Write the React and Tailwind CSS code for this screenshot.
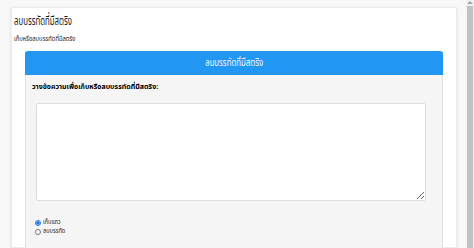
import React, { useState } from 'react'

const FONT = { fontFamily: '"Noto Sans Thai", "Noto Sans", sans-serif' }

export default function App() {
  const [mode, setMode] = useState('keep')
  const [text, setText] = useState('')

  return (
    <div className="flex h-[248px] w-[474px] overflow-hidden bg-[#f8f8f8]" style={FONT}>
      {/* ── PAGE ── */}
      <div className="flex-1 min-w-0 pl-[11px] pr-[9px] pt-[7px]">
        <div className="h-full bg-white border border-[#ececec] shadow-sm px-[1px]">
          <h1 className="mt-[4px] pl-[1px] text-[13px] leading-[18px] text-[#1a1a1a]">
            <span className="inline-block origin-left scale-x-[0.6]">ลบบรรทัดที่มีสตริง</span>
          </h1>
          <p className="mt-[4px] pl-[1px] text-[7px] leading-[10px] text-[#222]">
            <span className="inline-block origin-left scale-x-[0.83]">เก็บหรือลบบรรทัดที่มีสตริง</span>
          </p>

          {/* Panel */}
          <div className="mt-[7px] mx-[12px] h-full rounded-t-[3px] border border-[#e3e3e3] bg-[#f5f5f5]">
            <div className="h-[24px] flex items-center justify-center rounded-t-[3px] bg-[#2196f3] text-[#f4f9ff] text-[10px] -mx-px -mt-px">
              <span className="inline-block scale-x-[0.78]">ลบบรรทัดที่มีสตริง</span>
            </div>
            <div className="pl-[6px] pt-[7px]">
              <label className="block text-[7px] leading-[10px] font-bold text-[#000]">
                วางข้อความเพื่อเก็บหรือลบบรรทัดที่มีสตริง:
              </label>
              <textarea
                value={text}
                onChange={e => setText(e.target.value)}
                className="mt-[11px] ml-[4px] block w-[390px] h-[98px] resize-y bg-white border border-[#dcdcdc] rounded-[2px] focus:outline-none"
              />
              <div className="mt-[17px] ml-[3px] text-[7px] leading-[9px] text-[#222]">
                <label className="flex items-center gap-[2px]">
                  <input
                    type="radio"
                    name="mode"
                    checked={mode === 'keep'}
                    onChange={() => setMode('keep')}
                    className="m-0 w-[6px] h-[6px] accent-[#1a73e8]"
                  />
                  <span className="inline-block origin-left scale-x-[0.8]">เก็บแถว</span>
                </label>
                <label className="flex items-center gap-[2px]">
                  <input
                    type="radio"
                    name="mode"
                    checked={mode === 'remove'}
                    onChange={() => setMode('remove')}
                    className="m-0 w-[6px] h-[6px] accent-[#1a73e8]"
                  />
                  <span className="inline-block origin-left scale-x-[0.8]">ลบบรรทัด</span>
                </label>
              </div>
            </div>
          </div>
        </div>
      </div>

      {/* ── SCROLLBAR ── */}
      <div className="w-[8px] shrink-0 bg-[#f1f1f1] flex flex-col items-center pt-[1px]">
        <div className="w-0 h-0 border-l-[3px] border-r-[3px] border-b-[3px] border-l-transparent border-r-transparent border-b-[#a3a3a3]" />
        <div className="mt-[2px] w-[6px] flex-1 bg-[#c1c1c1]" />
      </div>
    </div>
  )
}
